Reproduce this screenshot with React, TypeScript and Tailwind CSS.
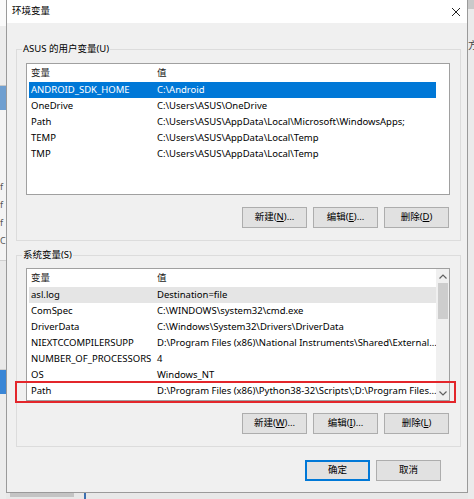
import type { ReactNode } from "react";

type Row = { name: string; value: string; state?: "selected" | "hover" };

const userRows: Row[] = [
  { name: "ANDROID_SDK_HOME", value: "C:\\Android", state: "selected" },
  { name: "OneDrive", value: "C:\\Users\\ASUS\\OneDrive" },
  { name: "Path", value: "C:\\Users\\ASUS\\AppData\\Local\\Microsoft\\WindowsApps;" },
  { name: "TEMP", value: "C:\\Users\\ASUS\\AppData\\Local\\Temp" },
  { name: "TMP", value: "C:\\Users\\ASUS\\AppData\\Local\\Temp" },
];

const systemRows: Row[] = [
  { name: "asl.log", value: "Destination=file", state: "hover" },
  { name: "ComSpec", value: "C:\\WINDOWS\\system32\\cmd.exe" },
  { name: "DriverData", value: "C:\\Windows\\System32\\Drivers\\DriverData" },
  { name: "NIEXTCCOMPILERSUPP", value: "D:\\Program Files (x86)\\National Instruments\\Shared\\External..." },
  { name: "NUMBER_OF_PROCESSORS", value: "4" },
  { name: "OS", value: "Windows_NT" },
  { name: "Path", value: "D:\\Program Files (x86)\\Python38-32\\Scripts\\;D:\\Program Files..." },
];

const VarRow = ({ row }: { row: Row }) => {
  const bg =
    row.state === "selected" ? "bg-[#0078d7] text-white" : row.state === "hover" ? "bg-[#e5e5e5]" : "";
  return (
    <div className={`flex h-[16px] w-[407px] items-center whitespace-nowrap ${bg}`}>
      <div className="w-[126px] overflow-hidden pl-[2px]">{row.name}</div>
      <div className="w-[281px] overflow-hidden pl-[2px]">{row.value}</div>
    </div>
  );
};

const VarList = ({ rows, scroll, height }: { rows: Row[]; scroll?: boolean; height: string }) => (
  <div className={`flex w-[424px] border border-[#a0a0a0] bg-white ${height}`}>
    <div className="flex-1 pl-[2px]">
      <div className="flex h-[18px] items-center text-[#1a1a1a]">
        <div className="w-[126px] pl-[2px]">变量</div>
        <div className="pl-[2px]">值</div>
      </div>
      {rows.map((r) => (
        <VarRow key={r.name + r.value} row={r} />
      ))}
    </div>
    {scroll && (
      <div className="flex w-[15px] flex-col items-center bg-[#f0f0f0]">
        <div className="flex h-[14px] items-center">
          <svg width="8" height="5" viewBox="0 0 8 5">
            <path d="M0.5 4.5 L4 1 L7.5 4.5" fill="none" stroke="#606060" strokeWidth="1.2" />
          </svg>
        </div>
        <div className="h-[36px] w-[10px] bg-[#cdcdcd]" />
        <div className="flex-1" />
        <div className="flex h-[14px] items-center">
          <svg width="8" height="5" viewBox="0 0 8 5">
            <path d="M0.5 0.5 L4 4 L7.5 0.5" fill="none" stroke="#606060" strokeWidth="1.2" />
          </svg>
        </div>
      </div>
    )}
  </div>
);

const Btn = ({ children, primary }: { children: ReactNode; primary?: boolean }) => (
  <div
    className={`flex h-[21px] w-[65px] items-center justify-center bg-[#e1e1e1] ${
      primary ? "border-2 border-[#0078d7]" : "border border-[#adadad]"
    }`}
  >
    {children}
  </div>
);

const GroupBox = ({
  title,
  children,
  className,
}: {
  title: ReactNode;
  children: ReactNode;
  className: string;
}) => (
  <div className={`relative border border-[#dcdcdc] pl-[9px] pr-[11px] ${className}`}>
    <div className="absolute left-[5px] top-[-8px] bg-[#f0f0f0] px-[1px] leading-[14px]">{title}</div>
    {children}
  </div>
);

export default function App() {
  return (
    <div className="flex h-[499px] w-[474px] bg-[#dfdfdf] font-['Noto_Sans','Noto_Sans_CJK_SC',sans-serif] text-[9.5px] text-black">
      {/* background window, left edge */}
      <div className="flex w-[6px] flex-col bg-[#f4f4f4]">
        <div className="h-[26px] bg-[#fafafa]" />
        <div className="h-[60px] border-b border-[#c8c8c8] bg-[#ececec]" />
        <div className="h-[24px] bg-[#6f9fd0]" />
        <div className="h-[70px] bg-[#f4f4f4]" />
        <div className="flex h-[80px] flex-col gap-[8px] pt-[2px] text-[9px] leading-[10px] text-[#555]">
          <span>f</span>
          <span>f</span>
          <span>f</span>
          <span>C</span>
        </div>
        <div className="h-[110px] border-y border-[#cfcfcf] bg-[#e9e9e9]" />
        <div className="h-[24px] bg-[#3a86d6]" />
        <div className="flex-1 bg-[#ececec]" />
      </div>

      <div className="flex w-[462px] flex-col">
        <div className="flex h-[493px] flex-col border-x border-b border-[#9a9a9a] bg-[#f0f0f0]">
          <div className="flex h-[23px] items-center justify-between bg-white pl-[5px] pr-[6px]">
            <span className="text-[9.5px]">环境变量</span>
            <svg width="10" height="10" viewBox="0 0 10 10">
              <path d="M1 1 L9 9 M9 1 L1 9" stroke="#222" strokeWidth="1" />
            </svg>
          </div>

          <div className="flex flex-col pl-[9px] pr-[6px]">
            <GroupBox title="ASUS 的用户变量(U)" className="mt-[26px] h-[192px] pt-[13px]">
              <VarList rows={userRows} height="h-[132px]" />
              <div className="mt-[12px] flex justify-end gap-[6px]">
                <Btn>
                  新建(<u>N</u>)...
                </Btn>
                <Btn>
                  编辑(<u>E</u>)...
                </Btn>
                <Btn>
                  删除(<u>D</u>)
                </Btn>
              </div>
            </GroupBox>

            <GroupBox title="系统变量(S)" className="mt-[14px] h-[192px] pt-[12px]">
              <VarList rows={systemRows} scroll height="h-[133px]" />
              <div className="mt-[12px] flex justify-end gap-[6px]">
                <Btn>
                  新建(<u>W</u>)...
                </Btn>
                <Btn>
                  编辑(<u>I</u>)...
                </Btn>
                <Btn>
                  删除(<u>L</u>)
                </Btn>
              </div>
              {/* red annotation box around the Path row */}
              <div className="absolute left-[-2px] top-[125px] h-[22px] w-[441px] border-2 border-[#e3262b]" />
            </GroupBox>

            <div className="mt-[13px] flex justify-end gap-[6px] pr-[20px]">
              <Btn primary>确定</Btn>
              <Btn>取消</Btn>
            </div>
          </div>
        </div>
        <div className="flex flex-1 items-start gap-[10px] bg-[#e8e8e8] pl-[4px]">
          <div className="h-[4px] w-[64px] bg-[#c4c4c4]" />
          <div className="h-full w-[2px] bg-[#3c6fb0]" />
        </div>
      </div>

      {/* background window, right edge */}
      <div className="flex w-[6px] flex-col bg-[#ebebeb]">
        <div className="h-[9px] bg-[#c9c9c9]" />
        <div className="h-[30px]" />
        <div className="overflow-hidden text-[10px] leading-[12px] text-[#444]">方</div>
        <div className="flex-1" />
      </div>
    </div>
  );
}
